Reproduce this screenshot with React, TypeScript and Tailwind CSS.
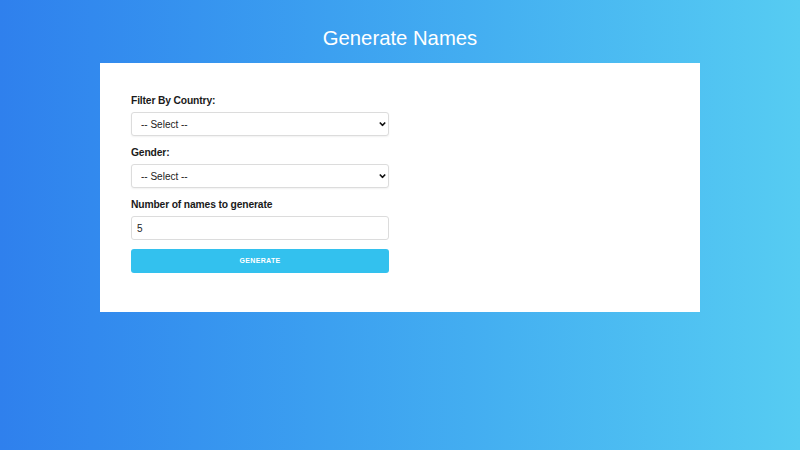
import { useState } from "react";

function Chevron() {
  return (
    <svg
      className="pointer-events-none absolute right-[3px] top-1/2 -translate-y-1/2 w-[7px] h-[5px]"
      viewBox="0 0 7 5"
      fill="none"
    >
      <path d="M0.8 1L3.5 3.8L6.2 1" stroke="#111" strokeWidth="1.6" />
    </svg>
  );
}

export default function App() {
  const [country, setCountry] = useState("");
  const [gender, setGender] = useState("");
  const [count, setCount] = useState("5");

  return (
    <div className="min-h-screen w-full bg-gradient-to-r from-[#2f80ed] to-[#56ccf2] font-['Liberation_Sans',Arial,sans-serif]">
      <h1 className="pt-[24px] mb-[11px] text-center text-[20.3px] leading-[28px] font-normal text-white">
        Generate Names
      </h1>

      <div className="mx-auto w-[600px] bg-white pt-[30px] pb-[39px] px-[31px]">
        <div className="w-[258px] flex flex-col gap-[9px]">
          {/* Country */}
          <div>
            <label className="block mb-[3px] text-[10.3px] tracking-[-0.15px] leading-[16px] font-bold text-[#1a1a1a]">
              Filter By Country:
            </label>
            <div className="relative">
              <select
                value={country}
                onChange={(e) => setCountry(e.target.value)}
                className="block w-full h-[24px] pl-[9px] pr-[14px] appearance-none text-[10px] text-[#222] bg-white border border-[#dcdcdc] rounded-[3px] shadow-[0_1px_2px_rgba(0,0,0,0.06)] outline-none"
              >
                <option value="">-- Select --</option>
              </select>
              <Chevron />
            </div>
          </div>

          {/* Gender */}
          <div>
            <label className="block mb-[3px] text-[10.3px] tracking-[-0.15px] leading-[16px] font-bold text-[#1a1a1a]">
              Gender:
            </label>
            <div className="relative">
              <select
                value={gender}
                onChange={(e) => setGender(e.target.value)}
                className="block w-full h-[24px] pl-[9px] pr-[14px] appearance-none text-[10px] text-[#222] bg-white border border-[#dcdcdc] rounded-[3px] shadow-[0_1px_2px_rgba(0,0,0,0.06)] outline-none"
              >
                <option value="">-- Select --</option>
                <option value="male">Male</option>
                <option value="female">Female</option>
              </select>
              <Chevron />
            </div>
          </div>

          {/* Count */}
          <div>
            <label className="block mb-[3px] text-[10.3px] tracking-[-0.15px] leading-[16px] font-bold text-[#1a1a1a]">
              Number of names to generate
            </label>
            <input
              type="text"
              value={count}
              onChange={(e) => setCount(e.target.value)}
              className="block w-full h-[24px] px-[5px] text-[10px] text-[#222] bg-white border border-[#dcdcdc] rounded-[3px] outline-none"
            />
          </div>

          <button className="w-full h-[24px] rounded-[3px] bg-[#33c1ee] text-white text-[7px] font-bold tracking-[0.05em] uppercase">
            Generate
          </button>
        </div>
      </div>
    </div>
  );
}
